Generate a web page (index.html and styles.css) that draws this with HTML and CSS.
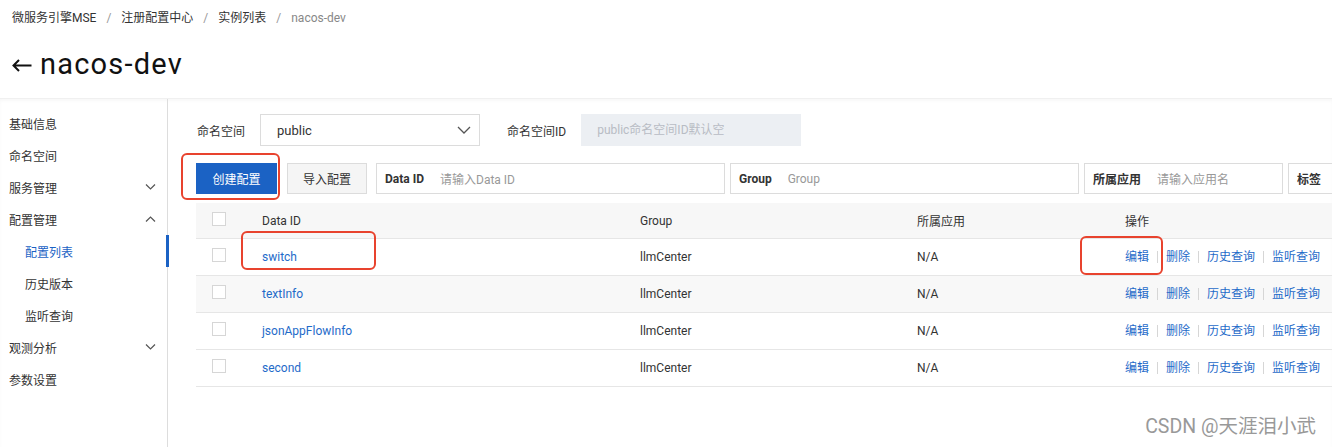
FILE: index.html
```html
<!DOCTYPE html>
<html lang="zh-CN">
  <head>
    <meta charset="UTF-8" />
    <title>nacos-dev</title>
    <link rel="stylesheet" href="styles.css">
  </head>
  <body>
    <div class="page">
      <div class="breadcrumb">
        <span>微服务引擎MSE</span>
        <span class="sep">/</span>
        <span>注册配置中心</span>
        <span class="sep">/</span>
        <span>实例列表</span>
        <span class="sep">/</span>
        <span class="current">nacos-dev</span>
      </div>

      <h1 class="page-title">
        <svg class="back" width="20" height="13" viewBox="0 0 20 13">
          <path d="M19.5 6.5H1.5M7 1L1.5 6.5 7 12" fill="none" stroke="#111" stroke-width="2" />
        </svg>
        nacos-dev
      </h1>

      <div class="layout">
        <aside class="sidebar">
          <div class="nav-item">基础信息</div>
          <div class="nav-item">命名空间</div>
          <div class="nav-item">服务管理
            <svg class="chev" width="11" height="6" viewBox="0 0 11 6"><path d="M1 0.5l4.5 4.5 4.5-4.5" fill="none" stroke="#555" stroke-width="1.2" /></svg>
          </div>
          <div class="nav-item">配置管理
            <svg class="chev" width="11" height="6" viewBox="0 0 11 6"><path d="M1 5.5l4.5-4.5 4.5 4.5" fill="none" stroke="#555" stroke-width="1.2" /></svg>
          </div>
          <div class="nav-item sub active">配置列表</div>
          <div class="nav-item sub">历史版本</div>
          <div class="nav-item sub">监听查询</div>
          <div class="nav-item">观测分析
            <svg class="chev" width="11" height="6" viewBox="0 0 11 6"><path d="M1 0.5l4.5 4.5 4.5-4.5" fill="none" stroke="#555" stroke-width="1.2" /></svg>
          </div>
          <div class="nav-item">参数设置</div>
        </aside>

        <main class="content">
          <div class="ns-row">
            <span class="ns-label">命名空间</span>
            <div class="select">
              <span>public</span>
              <svg width="14" height="8" viewBox="0 0 14 8"><path d="M1 1l6 6 6-6" fill="none" stroke="#555" stroke-width="1.3" /></svg>
            </div>
            <span class="ns-label ns-id">命名空间ID</span>
            <div class="input disabled">public命名空间ID默认空</div>
          </div>

          <div class="filter-row">
            <button class="btn primary">创建配置</button>
            <button class="btn import">导入配置</button>
            <div class="field w-data"><b>Data ID</b><span>请输入Data ID</span></div>
            <div class="field w-data"><b>Group</b><span>Group</span></div>
            <div class="field w-app"><b>所属应用</b><span>请输入应用名</span></div>
            <div class="field w-tag"><b>标签</b></div>
          </div>

          <table class="config-table">
            <colgroup>
              <col style="width: 50px" />
              <col style="width: 378px" />
              <col style="width: 277px" />
              <col style="width: 208px" />
              <col />
            </colgroup>
            <thead>
              <tr>
                <th><span class="checkbox"></span></th>
                <th>Data ID</th>
                <th>Group</th>
                <th>所属应用</th>
                <th>操作</th>
              </tr>
            </thead>
            <tbody id="rows"></tbody>
          </table>
        </main>
      </div>

      <div class="mark mark-create"></div>
      <div class="mark mark-switch"></div>
      <div class="mark mark-edit"></div>

      <div class="watermark">CSDN @天涯泪小武</div>
    </div>

    <script>
      const configs = [
        { id: "switch", group: "llmCenter", app: "N/A" },
        { id: "textInfo", group: "llmCenter", app: "N/A", hover: true },
        { id: "jsonAppFlowInfo", group: "llmCenter", app: "N/A" },
        { id: "second", group: "llmCenter", app: "N/A" },
      ];

      const ops = ["编辑", "删除", "历史查询", "监听查询"];

      document.getElementById("rows").innerHTML = configs
        .map(
          (c) => `
            <tr class="${c.hover ? "hover" : ""}">
              <td><span class="checkbox"></span></td>
              <td><a class="link">${c.id}</a></td>
              <td>${c.group}</td>
              <td>${c.app}</td>
              <td><div class="ops">${ops
                .map((o) => `<a class="link">${o}</a>`)
                .join('<span class="bar"></span>')}</div></td>
            </tr>
          `
        )
        .join("");
    </script>
  </body>
</html>
```

FILE: styles.css
```css
body {
  margin: 0;
  font-family: Roboto, "Noto Sans CJK SC", sans-serif;
  font-size: 12px;
  color: #333;
  background: #fff;
}

.page {
  position: relative;
  height: 447px;
  overflow: hidden;
}

.breadcrumb {
  padding: 8px 0 0 12px;
  line-height: 20px;
  color: #333;
}

.breadcrumb .sep {
  color: #999;
  margin: 0 7px;
}

.breadcrumb .current {
  color: #888;
}

.page-title {
  margin: 18px 0 0 12px;
  height: 36px;
  line-height: 36px;
  font-size: 29px;
  font-weight: 400;
  letter-spacing: 1.2px;
  color: #111;
  display: flex;
  align-items: center;
  gap: 8px;
}

.page-title .back {
  margin-top: 2px;
}

.layout {
  margin-top: 16px;
  display: flex;
  height: 349px;
  border-top: 1px solid #f0f0f0;
  box-shadow: inset 0 2px 3px rgba(0, 0, 0, 0.03);
}

.sidebar {
  width: 167px;
  flex-shrink: 0;
  border-right: 1px solid #ddd;
  padding-top: 8px;
}

.nav-item {
  height: 32px;
  display: flex;
  align-items: center;
  justify-content: space-between;
  padding: 0 11px 0 9px;
  color: #333;
  position: relative;
}

.nav-item.sub {
  padding-left: 25px;
}

.nav-item.active {
  color: #1b62c4;
}

.nav-item.active::after {
  content: "";
  position: absolute;
  right: -2px;
  top: 0;
  bottom: 0;
  width: 3px;
  background: #1b62c4;
}

.content {
  flex: 1;
  min-width: 0;
  padding: 15px 0 0 28px;
}

.ns-row {
  display: flex;
  align-items: center;
  height: 32px;
}

.ns-label {
  margin-left: 1px;
  margin-right: 15px;
}

.ns-id {
  margin-left: 27px;
}

.select {
  width: 220px;
  height: 32px;
  box-sizing: border-box;
  border: 1px solid #dcdcdc;
  display: flex;
  align-items: center;
  justify-content: space-between;
  padding: 0 8px 0 16px;
  font-size: 13px;
}

.input.disabled {
  width: 220px;
  height: 32px;
  line-height: 32px;
  box-sizing: border-box;
  padding-left: 16px;
  background: #eceff3;
  color: #b8bcc4;
}

.filter-row {
  display: flex;
  align-items: center;
  margin-top: 17px;
  height: 31px;
  overflow: hidden;
  white-space: nowrap;
}

.btn {
  height: 31px;
  width: 81px;
  border: 1px solid #dcdcdc;
  background: #f5f5f5;
  color: #333;
  font-family: inherit;
  font-size: 12px;
  margin-right: 10px;
  padding: 0;
  flex-shrink: 0;
}

.btn.primary {
  background: #1b62c4;
  border-color: #1b62c4;
  color: #fff;
}

.btn.import {
  width: 80px;
  margin-right: 9px;
}

.field {
  height: 31px;
  box-sizing: border-box;
  border: 1px solid #dcdcdc;
  display: flex;
  align-items: center;
  padding-left: 8px;
  margin-right: 5px;
  flex-shrink: 0;
}

.field b {
  color: #333;
  margin-right: 16px;
}

.field span {
  color: #999;
}

.w-data {
  width: 349px;
}

.w-app {
  width: 199px;
}

.w-tag {
  width: 120px;
}

.config-table {
  margin-top: 9px;
  width: 100%;
  table-layout: fixed;
  border-collapse: collapse;
}

.config-table th {
  height: 35px;
  background: #f7f7f7;
  font-weight: normal;
  text-align: left;
  padding: 0 0 0 16px;
  color: #333;
  border-bottom: 1px solid #e6e6e6;
}

.config-table td {
  height: 36px;
  padding: 0 0 0 16px;
  border-bottom: 1px solid #e6e6e6;
  white-space: nowrap;
}

.config-table tr.hover td {
  background: #f8f8f8;
}

.checkbox {
  display: inline-block;
  width: 12px;
  height: 12px;
  border: 1px solid #d6d6d6;
  background: #fff;
  vertical-align: middle;
  position: relative;
  top: -2px;
}

.link {
  color: #1f6bc9;
  cursor: pointer;
}

.ops {
  display: flex;
  align-items: center;
  line-height: 16px;
}

.ops .bar {
  width: 1px;
  height: 12px;
  background: #d6d6d6;
  margin: 0 8px;
}

.mark {
  position: absolute;
  border: 2.5px solid #e8432e;
  border-radius: 6px;
  box-sizing: border-box;
}

.mark-create {
  left: 181px;
  top: 153px;
  width: 99px;
  height: 47px;
}

.mark-switch {
  left: 241px;
  top: 231px;
  width: 135px;
  height: 39px;
}

.mark-edit {
  left: 1080px;
  top: 236px;
  width: 83px;
  height: 39px;
}

.watermark {
  position: absolute;
  right: 16px;
  bottom: 8px;
  font-size: 19.5px;
  color: #999;
  text-shadow: 0 0 2px #fff, 0 0 1px #fff;
}
```
